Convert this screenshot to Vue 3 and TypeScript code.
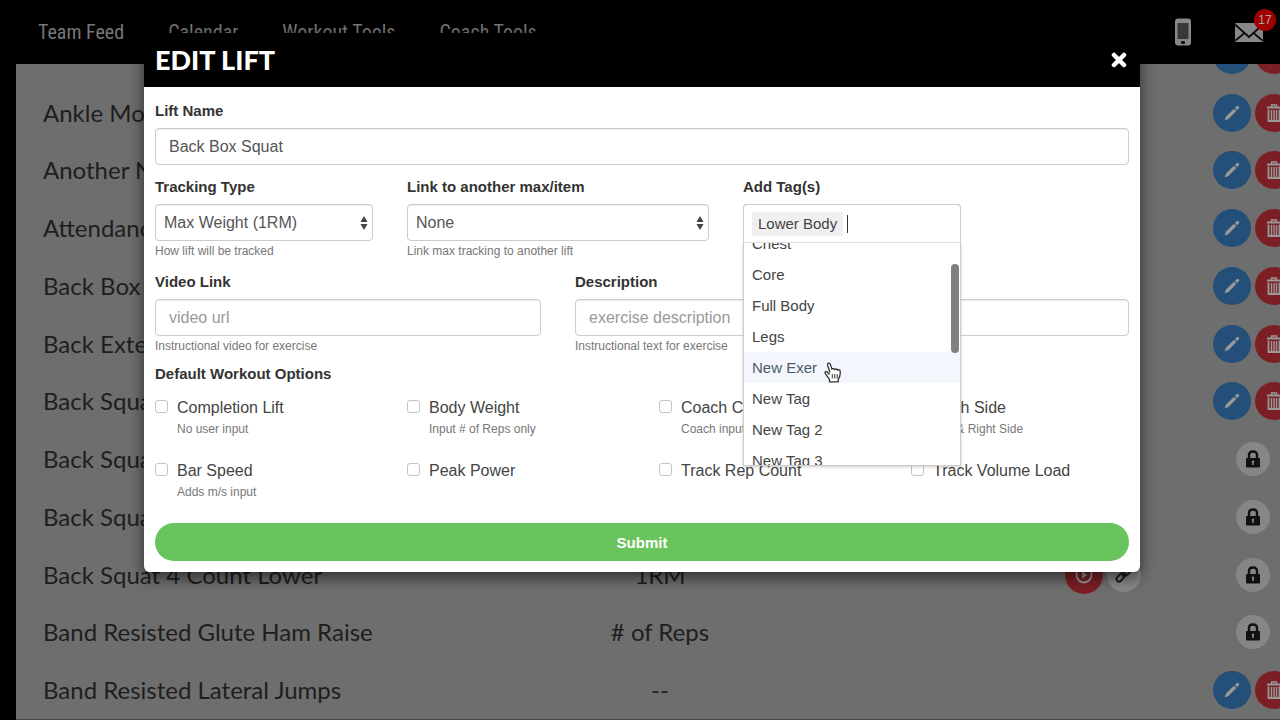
<script setup lang="ts">
import { ref } from 'vue'

type Kind = 'edit' | 'lock'

interface Lift {
  name: string
  tracking: string
  kind: Kind
  linked: boolean
}

interface Option {
  id: string
  label: string
  help: string
}

const navItems: string[] = ['Team Feed', 'Calendar', 'Workout Tools', 'Coach Tools']

const lift = (name: string, tracking: string, kind: Kind, linked = false): Lift => ({ name, tracking, kind, linked })

const lifts: Lift[] = [
  lift('', '', 'edit'),
  lift('Ankle Mobility', '', 'edit'),
  lift('Another New Lift', '', 'edit'),
  lift('Attendance', '', 'edit'),
  lift('Back Box Squat', '', 'edit'),
  lift('Back Extension', '', 'edit'),
  lift('Back Squat', '', 'edit'),
  lift('Back Squat', '', 'lock'),
  lift('Back Squat', '', 'lock'),
  lift('Back Squat 4 Count Lower', '1RM', 'lock', true),
  lift('Band Resisted Glute Ham Raise', '# of Reps', 'lock'),
  lift('Band Resisted Lateral Jumps', '--', 'edit'),
]

const options: Option[] = [
  { id: 'completion', label: 'Completion Lift', help: 'No user input' },
  { id: 'body-weight', label: 'Body Weight', help: 'Input # of Reps only' },
  { id: 'coach', label: 'Coach Complete', help: 'Coach input only' },
  { id: 'each-side', label: 'Each Side', help: 'Left & Right Side' },
  { id: 'bar-speed', label: 'Bar Speed', help: 'Adds m/s input' },
  { id: 'peak-power', label: 'Peak Power', help: '' },
  { id: 'rep-count', label: 'Track Rep Count', help: '' },
  { id: 'volume', label: 'Track Volume Load', help: '' },
]

const tags: string[] = ['Chest', 'Core', 'Full Body', 'Legs', 'New Exer', 'New Tag', 'New Tag 2', 'New Tag 3']
const activeTag = ref('New Exer')

const liftName = ref('Back Box Squat')
const trackingType = ref('Max Weight (1RM)')
const linkedTo = ref('None')
const videoUrl = ref('')
const description = ref('')
const tagSearch = ref('')
const checked = ref<string[]>([])
</script>

<template>
  <div class="page">
    <header class="topbar">
      <nav class="nav">
        <a v-for="item in navItems" :key="item" href="#">{{ item }}</a>
      </nav>
      <div class="tools">
        <button class="tool" type="button" aria-label="Mobile">
          <svg width="16" height="28" viewBox="0 0 16 28">
            <rect x="0" y="0.500" width="16" height="27" rx="3" fill="#888" />
            <rect x="2.500" y="5" width="11" height="16" fill="#383838" />
            <rect x="6" y="23" width="4" height="3" rx="1" fill="#111" />
          </svg>
        </button>
        <button class="tool" type="button" aria-label="Messages">
          <svg width="28" height="19" viewBox="0 0 28 19">
            <rect width="28" height="19" rx="1" fill="#888" />
            <path d="M0 1.500L14 14L28 1.500M0.500 17.500L9.500 10M27.500 17.500L18.500 10" fill="none" stroke="#0a0a0a" stroke-width="1.800" />
          </svg>
          <span class="badge">17</span>
        </button>
      </div>
    </header>

    <main class="list">
      <table>
        <colgroup>
          <col class="c-name" />
          <col class="c-type" />
          <col />
          <col class="c-actions" />
        </colgroup>
        <tbody>
          <tr v-for="(row, i) in lifts" :key="i">
            <td class="name">{{ row.name }}</td>
            <td class="type">{{ row.tracking }}</td>
            <td class="links">
              <div v-if="row.linked" class="group">
                <button class="round red" type="button" aria-label="Play video">
                  <svg width="18" height="18" viewBox="0 0 18 18">
                    <circle cx="9" cy="9" r="7.500" fill="none" stroke="#999" stroke-width="2" />
                    <path d="M7 5.500L12.500 9L7 12.500Z" fill="#999" />
                  </svg>
                </button>
                <button class="round small" type="button" aria-label="Link">
                  <svg width="18" height="18" viewBox="0 0 18 18" fill="none" stroke="#1b1b1b" stroke-width="2">
                    <rect x="1" y="9" width="9" height="5" rx="2.500" transform="rotate(-45 5.500 11.500)" />
                    <rect x="7.500" y="3" width="9" height="5" rx="2.500" transform="rotate(-45 12 5.500)" />
                    <path d="M7 10.500L11 6.500" />
                  </svg>
                </button>
              </div>
            </td>
            <td class="actions">
              <div v-if="row.kind === 'edit'" class="group">
                <button class="round blue" type="button" aria-label="Edit">
                  <svg width="16" height="16" viewBox="0 0 16 16" fill="#999">
                    <path d="M0.500 15.500L2 11.500L10 3.700L12.300 6L4.500 14Z" />
                    <path d="M10.800 2.900L13 0.900Q13.600 0.500 14.200 1L15 1.800Q15.500 2.400 15.100 3L13.100 5.200Z" />
                  </svg>
                </button>
                <button class="round red" type="button" aria-label="Delete">
                  <svg width="16" height="18" viewBox="0 0 16 18" fill="none" stroke="#999">
                    <path d="M5.500 3V1H10.500V3" stroke-width="1.400" />
                    <path d="M1 3.500H15" stroke-width="2" />
                    <path d="M2.500 5.500V17H13.500V5.500" stroke-width="1.800" />
                    <path d="M5.500 6V16.500M8 6V16.500M10.500 6V16.500" stroke-width="1.400" />
                  </svg>
                </button>
              </div>
              <div v-else class="group">
                <button class="round small" type="button" aria-label="Locked">
                  <svg width="14" height="18" viewBox="0 0 14 18">
                    <path d="M3 9V5Q3 1.500 7 1.500Q11 1.500 11 5V9" fill="none" stroke="#111" stroke-width="2.400" />
                    <rect y="8" width="14" height="9.500" rx="1" fill="#111" />
                    <path d="M7 10.500A1.300 1.300 0 0 1 7.800 12.800V15H6.200V12.800A1.300 1.300 0 0 1 7 10.500Z" fill="#868686" />
                  </svg>
                </button>
              </div>
            </td>
          </tr>
        </tbody>
      </table>
    </main>

    <section class="modal" role="dialog" aria-labelledby="modal-title">
      <div class="modal-head">
        <h1 id="modal-title">EDIT LIFT</h1>
        <button class="close" type="button" aria-label="Close">
          <svg width="16" height="16" viewBox="0 0 16 16">
            <path d="M3 3L13 13M13 3L3 13" stroke="#fff" stroke-width="4.500" stroke-linecap="round" />
          </svg>
        </button>
      </div>

      <form class="form" @submit.prevent>
        <div class="field span12">
          <label for="lift-name">Lift Name</label>
          <input id="lift-name" v-model="liftName" class="control" type="text" />
        </div>

        <div class="field span3">
          <label for="tracking">Tracking Type</label>
          <div class="select-wrap">
            <select id="tracking" v-model="trackingType" class="control">
              <option>Max Weight (1RM)</option>
            </select>
            <svg class="arrows" width="8" height="14" viewBox="0 0 8 14" fill="#444">
              <path d="M4 0L7.500 6H0.500ZM4 14L7.500 8H0.500Z" />
            </svg>
          </div>
          <small>How lift will be tracked</small>
        </div>
        <div class="field span4">
          <label for="linked">Link to another max/item</label>
          <div class="select-wrap">
            <select id="linked" v-model="linkedTo" class="control">
              <option>None</option>
            </select>
            <svg class="arrows" width="8" height="14" viewBox="0 0 8 14" fill="#444">
              <path d="M4 0L7.500 6H0.500ZM4 14L7.500 8H0.500Z" />
            </svg>
          </div>
          <small>Link max tracking to another lift</small>
        </div>
        <div class="field span3">
          <label for="tags">Add Tag(s)</label>
          <div class="tagbox">
            <div class="tag-control">
              <span class="tag">Lower Body</span>
              <input id="tags" v-model="tagSearch" type="text" />
            </div>
            <div class="menu">
              <ul>
                <li v-for="tag in tags" :key="tag" :class="{ active: tag === activeTag }">
                  {{ tag }}
                  <svg v-if="tag === activeTag" class="pointer" width="18" height="21" viewBox="0 0 18 21">
                    <path
                      d="M5.500 12.500L3.200 10Q1.900 9 1.200 10Q0.700 10.900 1.700 12.100L5.500 17.300V19.800H14.200V17.500Q16.200 14.500 16.200 11.500V9Q16 7.600 14.900 7.700Q14 7.700 13.700 8.400Q13.400 6.900 12.100 7Q11.200 7 10.800 7.700Q10.300 6.400 9.200 6.500Q8.300 6.500 7.900 7.100L6.300 2.300Q5.700 0.800 4.400 1.200Q3.200 1.700 3.600 3.200L6 10.500"
                      fill="#fff"
                      stroke="#333"
                      stroke-width="1.300"
                      stroke-linejoin="round"
                    />
                    <path d="M8.300 12V16.500M10.800 12V16.500M13.200 12V16.500" stroke="#333" stroke-width="1" />
                  </svg>
                </li>
              </ul>
              <span class="thumb"></span>
            </div>
          </div>
        </div>

        <div class="field span5">
          <label for="video">Video Link</label>
          <input id="video" v-model="videoUrl" class="control" type="text" placeholder="video url" />
          <small>Instructional video for exercise</small>
        </div>
        <div class="field span7">
          <label for="description">Description</label>
          <input id="description" v-model="description" class="control" type="text" placeholder="exercise description" />
          <small>Instructional text for exercise</small>
        </div>

        <fieldset class="options span12">
          <legend>Default Workout Options</legend>
          <div class="option-grid">
            <div v-for="opt in options" :key="opt.id" class="option">
              <input :id="opt.id" v-model="checked" type="checkbox" :value="opt.id" />
              <div>
                <label :for="opt.id">{{ opt.label }}</label>
                <small v-if="opt.help">{{ opt.help }}</small>
              </div>
            </div>
          </div>
        </fieldset>

        <button class="submit span12" type="submit">Submit</button>
      </form>
    </section>
  </div>
</template>

<style>
body {
  margin: 0;
  background: #000;
}
</style>

<style scoped>
* {
  box-sizing: border-box;
}

.page {
  position: relative;
  display: flex;
  flex-direction: column;
  height: 100vh;
  overflow: hidden;
  background: #000;
  font-family: "Liberation Sans", Arial, sans-serif;
  font-size: 16px;
  color: #333;
}

button {
  padding: 0;
  border: 0;
  background: none;
  font: inherit;
}

svg {
  display: block;
}

.topbar {
  display: flex;
  flex: none;
  align-items: center;
  justify-content: space-between;
  height: 64px;
  padding: 0 17px 0 38px;
}

.nav {
  display: flex;
  gap: 44px;
}

.nav a {
  color: #777;
  font: 20px/28px "Roboto Condensed", "Liberation Sans Narrow", "Liberation Sans", sans-serif;
  text-decoration: none;
}

.tools {
  display: flex;
  align-items: center;
  gap: 44px;
}

.tool {
  position: relative;
}

.badge {
  position: absolute;
  top: -14px;
  right: -13px;
  width: 22px;
  height: 22px;
  border-radius: 50%;
  background: #a00000;
  color: #aaa;
  font-size: 12px;
  line-height: 22px;
  text-align: center;
}

.list {
  flex: 1;
  min-height: 0;
  margin-left: 16px;
  overflow: hidden;
  border-bottom: 1px solid #444;
  background: #6e6e6e;
}

table {
  width: calc(100% + 23px);
  height: calc(100% + 38px);
  margin-top: -38px;
  table-layout: fixed;
  border-collapse: collapse;
  color: #1e1e1e;
  font: 24px/30px Lato, sans-serif;
}

.c-name {
  width: 504px;
}

.c-type {
  width: 280px;
}

.c-actions {
  width: 100px;
}

td {
  padding: 0;
  white-space: nowrap;
}

.name {
  padding-left: 27px;
}

.type {
  text-align: center;
}

.links {
  padding-right: 62px;
}

.group {
  display: flex;
  align-items: center;
  justify-content: center;
  gap: 4px;
  height: 38px;
}

.links .group {
  justify-content: flex-end;
}

.round {
  display: flex;
  flex: none;
  align-items: center;
  justify-content: center;
  width: 38px;
  height: 38px;
  border-radius: 50%;
}

.round.small {
  width: 34px;
  height: 34px;
  background: #868686;
}

.blue {
  background: #234f78;
}

.round.red {
  background: #7c1f25;
}

.modal {
  position: absolute;
  top: 33px;
  right: 140px;
  left: 144px;
  border-radius: 6px;
  background: #fff;
  box-shadow: 0 5px 15px rgba(0, 0, 0, 0.6);
}

.modal-head {
  display: flex;
  align-items: center;
  justify-content: space-between;
  height: 54px;
  padding: 0 13px 0 11px;
  background: #000;
}

h1 {
  margin: 0;
  color: #fff;
  font: 900 27px/52px Lato, sans-serif;
}

.form {
  display: grid;
  grid-template-columns: repeat(12, 1fr);
  column-gap: 34px;
  padding: 14px 11px 11px;
}

.span3 {
  grid-column: span 3;
}

.span4 {
  grid-column: span 4;
}

.span5 {
  grid-column: span 5;
}

.span7 {
  grid-column: span 7;
}

.span12 {
  grid-column: span 12;
}

.field {
  display: flex;
  flex-direction: column;
  min-width: 0;
  padding-bottom: 12px;
}

.field > label,
legend {
  padding: 0;
  font-size: 15px;
  font-weight: 700;
  line-height: 20px;
}

.field > label {
  margin-bottom: 7px;
}

.control {
  display: block;
  width: 100%;
  height: 37px;
  padding: 0 13px;
  border: 1px solid #ccc;
  border-radius: 4px;
  outline: 0;
  background: #fff;
  box-shadow: inset 0 1px 1px rgba(0, 0, 0, 0.08);
  color: #555;
  font: 16px/20px "Liberation Sans", Arial, sans-serif;
}

.control::placeholder {
  color: #999;
}

select.control {
  padding: 0 24px 0 8px;
  appearance: none;
}

.select-wrap {
  position: relative;
}

.arrows {
  position: absolute;
  top: 12px;
  right: 5px;
  pointer-events: none;
}

small {
  display: block;
  color: #777;
  font-size: 12px;
  line-height: 18px;
}

.field small {
  margin-top: 1px;
}

.tagbox {
  position: relative;
  z-index: 1;
}

.tag-control {
  display: flex;
  align-items: center;
  height: 39px;
  padding: 0 8px;
  border: 1px solid #ccc;
  border-radius: 4px 4px 0 0;
  border-bottom-color: #e8e8e8;
  background: #fff;
}

.tag {
  flex: none;
  padding: 0 6px;
  background: #f0f0f0;
  color: #444;
  font-size: 15px;
  line-height: 24px;
}

.tag-control input {
  min-width: 0;
  flex: 1;
  height: 18px;
  margin-left: 4px;
  padding: 0 2px;
  border: 0;
  border-left: 1px solid #333;
  outline: 0;
  background: none;
  font: inherit;
}

.menu {
  position: absolute;
  top: 39px;
  right: 0;
  left: 0;
  height: 223px;
  overflow: hidden;
  border: 1px solid #ccc;
  border-top: 0;
  background: #fff;
  box-shadow: 0 1px 3px rgba(0, 0, 0, 0.2);
}

.menu ul {
  margin: -15px 0 0;
  padding: 0;
  list-style: none;
}

.menu li {
  position: relative;
  padding-left: 8px;
  color: #444;
  font-size: 15px;
  line-height: 31px;
}

.menu li.active {
  background: #f3f6fd;
  color: #4c5a68;
}

.pointer {
  position: absolute;
  top: 10px;
  left: 80px;
}

.thumb {
  position: absolute;
  top: 21px;
  right: 1px;
  width: 8px;
  height: 89px;
  border-radius: 4px;
  background: #7f7f7f;
}

.options {
  min-width: 0;
  margin: -3px 0 0;
  padding: 0;
  border: 0;
}

.option-grid {
  display: grid;
  grid-template-columns: repeat(4, 1fr);
  gap: 11px 34px;
  padding-top: 13px;
}

.option {
  display: flex;
  gap: 9px;
  min-height: 52px;
}

.option:nth-child(n + 5) {
  min-height: 46px;
}

.option label {
  display: block;
  color: #444;
  line-height: 22px;
  white-space: nowrap;
}

.option small {
  line-height: 20px;
}

.option input {
  flex: none;
  width: 13px;
  height: 13px;
  margin: 3px 0 0;
  border: 1px solid #c4c4c4;
  border-radius: 3px;
  appearance: none;
  background: #fff;
}

.option input:checked {
  background: #3b82d0;
}

.submit {
  height: 38px;
  margin-top: 17px;
  border-radius: 19px;
  background: #69c45e;
  color: #fff;
  font-size: 15px;
  font-weight: 700;
}
</style>
